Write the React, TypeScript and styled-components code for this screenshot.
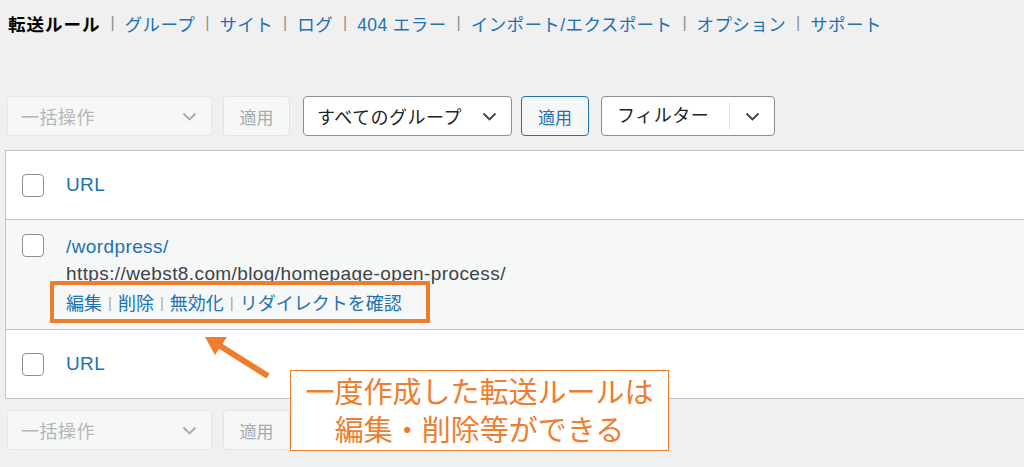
import React from "react";
import styled, { createGlobalStyle } from "styled-components";

const FONT = `"Liberation Sans", "Noto Sans CJK JP", sans-serif`;
const BLUE = "#2271b1";
const ORANGE = "#ee7d2e";

const Global = createGlobalStyle`
  html, body { margin: 0; padding: 0; }
  body {
    background: #f0f0f1;
    font-family: ${FONT};
    overflow: hidden;
    width: 1024px;
    height: 467px;
  }
`;

const Page = styled.div`
  position: relative;
  padding: 0 0 0 5px;
  width: 1060px;
`;

const Nav = styled.ul`
  display: flex;
  align-items: center;
  list-style: none;
  margin: 0;
  padding: 10px 0 0 3px;
  height: 26px;
  font-size: 17.5px;
  color: #50575e;
`;

const NavItem = styled.li<{ $current?: boolean }>`
  display: flex;
  align-items: center;
  white-space: nowrap;
  a {
    color: ${(p) => (p.$current ? "#000" : BLUE)};
    font-weight: ${(p) => (p.$current ? 700 : 400)};
    letter-spacing: ${(p) => (p.$current ? "1px" : "0.4px")};
    text-decoration: none;
  }
`;

const Sep = styled.span`
  color: #8c8f94;
  margin: 0 10px;
  font-size: 16px;
`;

const Toolbar = styled.div<{ $top: number }>`
  display: flex;
  align-items: center;
  margin-top: ${(p) => p.$top}px;
  padding-left: 2px;
  height: 40px;
`;

const Select = styled.div<{ $w: number; $disabled?: boolean; $mr: number }>`
  box-sizing: border-box;
  display: flex;
  align-items: center;
  justify-content: space-between;
  width: ${(p) => p.$w}px;
  height: 40px;
  margin-right: ${(p) => p.$mr}px;
  padding: 0 14px 0 13px;
  border: 1px solid ${(p) => (p.$disabled ? "#e6e6e8" : "#8c8f94")};
  border-radius: 4px;
  background: ${(p) => (p.$disabled ? "#f6f7f7" : "#fff")};
  color: ${(p) => (p.$disabled ? "#b4b6b9" : "#1d2327")};
  font-size: 18px;
  letter-spacing: 0.5px;
`;

const Button = styled.div<{ $primary?: boolean; $w: number; $mr: number }>`
  box-sizing: border-box;
  display: flex;
  align-items: center;
  justify-content: center;
  width: ${(p) => p.$w}px;
  height: 40px;
  margin-right: ${(p) => p.$mr}px;
  border: 1px solid ${(p) => (p.$primary ? BLUE : "#e2e3e5")};
  border-radius: 4px;
  background: #f6f7f7;
  color: ${(p) => (p.$primary ? BLUE : "#a7aaad")};
  font-size: 17px;
`;

const FilterBox = styled.div`
  box-sizing: border-box;
  display: flex;
  align-items: center;
  width: 174px;
  height: 40px;
  border: 1px solid #8c8f94;
  border-radius: 4px;
  background: #fff;
  color: #1d2327;
  font-size: 18px;
  letter-spacing: 0.5px;
`;

const FilterLabel = styled.span`
  flex: 1;
  padding-left: 15px;
  border-right: 1px solid #dcdcde;
  line-height: 26px;
`;

const FilterToggle = styled.span`
  display: flex;
  width: 44px;
  justify-content: center;
`;

const Table = styled.div`
  margin-top: 14px;
  border: 1px solid #c3c4c7;
  border-right: none;
  background: #fff;
`;

const Row = styled.div<{ $alt?: boolean; $h: number; $last?: boolean }>`
  display: flex;
  align-items: ${(p) => (p.$alt ? "flex-start" : "center")};
  height: ${(p) => p.$h}px;
  box-sizing: border-box;
  padding-top: ${(p) => (p.$alt ? "14px" : "0")};
  background: ${(p) => (p.$alt ? "#f6f7f7" : "#fff")};
  border-bottom: ${(p) => (p.$last ? "none" : "1px solid #c3c4c7")};
`;

const CheckCell = styled.div`
  width: 60px;
  display: flex;
  justify-content: flex-start;
  padding-left: 16px;
  box-sizing: border-box;
`;

const Checkbox = styled.span`
  display: block;
  width: 20px;
  height: 21px;
  border: 1px solid #8c8f94;
  border-radius: 4px;
  background: #fff;
`;

const Cell = styled.div`
  display: flex;
  flex-direction: column;
`;

const Link = styled.a`
  color: ${BLUE};
  font-size: 19px;
  letter-spacing: 0.4px;
  text-decoration: none;
  line-height: 26px;
`;

const Target = styled.div`
  color: #3c434a;
  font-size: 19px;
  letter-spacing: 0.4px;
  line-height: 28px;
`;

const RowActions = styled.div`
  display: flex;
  align-items: center;
  margin: -7px 0 0 -16px;
  padding: 0 0 0 12px;
  height: 42px;
  box-sizing: border-box;
  border: 4px solid ${ORANGE};
  width: 380px;
  font-size: 18px;
  white-space: nowrap;
  a {
    flex-shrink: 0;
    color: ${BLUE};
    text-decoration: none;
  }
`;

const ActionSep = styled.span`
  flex-shrink: 0;
  color: #a7aaad;
  margin: 0 6px;
  font-size: 15px;
`;

const Callout = styled.div`
  position: absolute;
  left: 290px;
  top: 370px;
  width: 379px;
  height: 81px;
  box-sizing: border-box;
  border: 1px solid ${ORANGE};
  background: #fff;
  color: ${ORANGE};
  font-family: "Noto Sans CJK JP", sans-serif;
  font-size: 29px;
  line-height: 38px;
  text-align: center;
`;

const Arrow = styled.svg`
  position: absolute;
  left: 195px;
  top: 325px;
`;

const Chevron = () => (
  <svg width="15" height="9" viewBox="0 0 15 9">
    <polyline points="1.5,1.5 7.5,7.5 13.5,1.5" fill="none" stroke="currentColor" strokeWidth="1.8" />
  </svg>
);

const ChevronWrap = styled.span<{ $c: string }>`
  display: flex;
  color: ${(p) => p.$c};
`;

const navItems = ["グループ", "サイト", "ログ", "404 エラー", "インポート/エクスポート", "オプション", "サポート"];

const BulkBar = ({ top, children }: { top: number; children?: React.ReactNode }) => (
  <Toolbar $top={top}>
    <Select $w={205} $disabled $mr={11}>
      <span>一括操作</span>
      <ChevronWrap $c="#a7aaad"><Chevron /></ChevronWrap>
    </Select>
    <Button $w={67} $mr={13}>適用</Button>
    {children}
  </Toolbar>
);

export default function App() {
  return (
    <>
      <Global />
      <Page>
        <Nav>
          <NavItem $current><a>転送ルール</a></NavItem>
          {navItems.map((n) => (
            <NavItem key={n}>
              <Sep>|</Sep>
              <a>{n}</a>
            </NavItem>
          ))}
        </Nav>
        <BulkBar top={60}>
          <Select $w={209} $mr={9}>
            <span>すべてのグループ</span>
            <ChevronWrap $c="#3c434a"><Chevron /></ChevronWrap>
          </Select>
          <Button $primary $w={68} $mr={12}>適用</Button>
          <FilterBox>
            <FilterLabel>フィルター</FilterLabel>
            <FilterToggle>
              <ChevronWrap $c="#3c434a"><Chevron /></ChevronWrap>
            </FilterToggle>
          </FilterBox>
        </BulkBar>
        <Table>
          <Row $h={69}>
            <CheckCell><Checkbox /></CheckCell>
            <Link>URL</Link>
          </Row>
          <Row $h={110} $alt>
            <CheckCell><Checkbox /></CheckCell>
            <Cell>
              <Link>/wordpress/</Link>
              <Target>https://webst8.com/blog/homepage-open-process/</Target>
              <RowActions>
                <a>編集</a>
                <ActionSep>|</ActionSep>
                <a>削除</a>
                <ActionSep>|</ActionSep>
                <a>無効化</a>
                <ActionSep>|</ActionSep>
                <a>リダイレクトを確認</a>
              </RowActions>
            </Cell>
          </Row>
          <Row $h={68} $last>
            <CheckCell><Checkbox /></CheckCell>
            <Link>URL</Link>
          </Row>
        </Table>
        <BulkBar top={11} />
        <Arrow width="90" height="60" viewBox="0 0 90 60">
          <line x1="73" y1="51" x2="22" y2="19" stroke={ORANGE} strokeWidth="6" />
          <polygon points="10,12 32,12 20,30" fill={ORANGE} />
        </Arrow>
        <Callout>
          一度作成した転送ルールは
          <br />
          編集・削除等ができる
        </Callout>
      </Page>
    </>
  );
}
